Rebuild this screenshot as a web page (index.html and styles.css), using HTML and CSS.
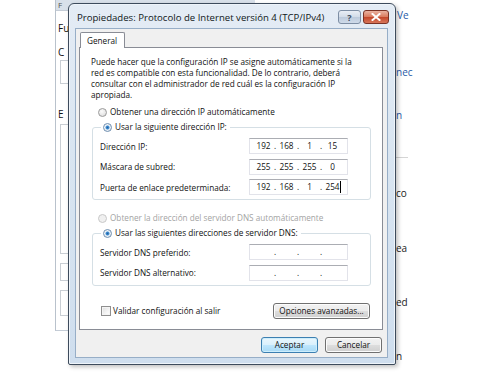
FILE: index.html
```html
<!DOCTYPE html>
<html lang="es">
<head>
    <meta charset="UTF-8">
    <meta name="viewport" content="width=device-width, initial-scale=1.0">
    <title>Propiedades: Protocolo de Internet versión 4 (TCP/IPv4)</title>
    <link rel="stylesheet" href="styles.css">
</head>
<body>
    <div class="desktop">
        <!-- window behind the dialog -->
        <div class="bg-window">
            <div class="bg-caption">F</div>
            <div class="bg-label bg-fu">Fu</div>
            <div class="bg-label">C</div>
            <div class="bg-box bg-box-small"></div>
            <div class="bg-label bg-e">E</div>
            <div class="bg-box bg-box-tall"></div>
            <div class="bg-box bg-box-btn"></div>
            <div class="bg-box bg-box-mid"></div>
        </div>

        <div class="bg-page">
            <div class="frag link frag-1">Ve</div>
            <div class="frag link frag-2">nec</div>
            <div class="frag link frag-3">n</div>
            <div class="frag-rule"></div>
            <div class="frag frag-4">co</div>
            <div class="frag frag-5">ea</div>
            <div class="frag frag-6">ed</div>
            <div class="frag frag-7">n</div>
        </div>

        <div class="dialog">
            <div class="titlebar">
                <span class="title">Propiedades: Protocolo de Internet versión 4 (TCP/IPv4)</span>
                <div class="caption-buttons">
                    <span class="cap-btn cap-help">?</span>
                    <span class="cap-btn cap-close">
                        <svg width="10" height="8" viewBox="0 0 10 8">
                            <path d="M1.5 1 L8.5 7 M8.5 1 L1.5 7" stroke="#fff" stroke-width="2" stroke-linecap="square"/>
                        </svg>
                    </span>
                </div>
            </div>

            <div class="client">
                <div class="tabs">
                    <div class="tab">General</div>
                </div>
                <div class="panel">
                    <p class="intro">Puede hacer que la configuración IP se asigne automáticamente si la red es compatible con esta funcionalidad. De lo contrario, deberá consultar con el administrador de red cuál es la configuración IP apropiada.</p>

                    <div class="option option-first">
                        <span class="radio"></span>
                        <span>Obtener una dirección IP automáticamente</span>
                    </div>

                    <fieldset class="group">
                        <legend class="option">
                            <span class="radio checked"></span>
                            <span>Usar la siguiente dirección IP:</span>
                        </legend>
                        <div class="field-row">
                            <span class="field-label">Dirección IP:</span>
                            <div class="ip-box">
                                <span class="oct">192</span><span class="dot">.</span><span class="oct">168</span><span class="dot">.</span><span class="oct">1</span><span class="dot">.</span><span class="oct">15</span>
                            </div>
                        </div>
                        <div class="field-row">
                            <span class="field-label">Máscara de subred:</span>
                            <div class="ip-box">
                                <span class="oct">255</span><span class="dot">.</span><span class="oct">255</span><span class="dot">.</span><span class="oct">255</span><span class="dot">.</span><span class="oct">0</span>
                            </div>
                        </div>
                        <div class="field-row">
                            <span class="field-label">Puerta de enlace predeterminada:</span>
                            <div class="ip-box">
                                <span class="oct">192</span><span class="dot">.</span><span class="oct">168</span><span class="dot">.</span><span class="oct">1</span><span class="dot">.</span><span class="oct caret">254</span>
                            </div>
                        </div>
                    </fieldset>

                    <div class="option option-dns disabled">
                        <span class="radio"></span>
                        <span>Obtener la dirección del servidor DNS automáticamente</span>
                    </div>

                    <fieldset class="group">
                        <legend class="option">
                            <span class="radio checked"></span>
                            <span>Usar las siguientes direcciones de servidor DNS:</span>
                        </legend>
                        <div class="field-row">
                            <span class="field-label">Servidor DNS preferido:</span>
                            <div class="ip-box">
                                <span class="oct"></span><span class="dot">.</span><span class="oct"></span><span class="dot">.</span><span class="oct"></span><span class="dot">.</span><span class="oct"></span>
                            </div>
                        </div>
                        <div class="field-row">
                            <span class="field-label">Servidor DNS alternativo:</span>
                            <div class="ip-box">
                                <span class="oct"></span><span class="dot">.</span><span class="oct"></span><span class="dot">.</span><span class="oct"></span><span class="dot">.</span><span class="oct"></span>
                            </div>
                        </div>
                    </fieldset>

                    <div class="panel-footer">
                        <div class="check-option">
                            <span class="checkbox"></span>
                            <span>Validar configuración al salir</span>
                        </div>
                        <button class="win-btn btn-advanced">Opciones avanzadas...</button>
                    </div>
                </div>

                <div class="dialog-buttons">
                    <button class="win-btn btn-default">Aceptar</button>
                    <button class="win-btn">Cancelar</button>
                </div>
            </div>
        </div>
    </div>
</body>
</html>
```

FILE: styles.css
```css
:root {
    --ui-font: 'Open Sans', 'Liberation Sans', sans-serif;
    --frame-edge: #3d4b5c;
    --tab-border: #898c95;
    --group-border: #d5dfe5;
    --link: #1f5aa8;
}

body {
    margin: 0;
    background: #fff;
    font-family: var(--ui-font);
    font-size: 8.2px;
    color: #111;
}

.desktop {
    position: relative;
    width: 480px;
    height: 374px;
    overflow: hidden;
    background: #fff;
}

/* background window on the left */
.bg-window {
    position: absolute;
    left: 55px;
    top: 0;
    width: 200px;
    height: 331px;
    background: #fff;
    border-left: 1px solid #b9c2cc;
    border-bottom: 1px solid #c4ccd6;
    padding-left: 2px;
    box-sizing: border-box;
}

.bg-caption {
    height: 10px;
    margin-left: -2px;
    padding-left: 2px;
    background: #d9e1ea;
    border-bottom: 1px solid #c4ccd6;
    font-size: 8px;
    line-height: 10px;
    color: #555;
}

.bg-label {
    font-size: 10px;
    line-height: 12px;
    margin-top: 12px;
}

.bg-fu {
    margin-top: 11px;
}

.bg-e {
    margin-top: 24px;
}

.bg-box {
    border: 1px solid #c9ced4;
    margin-left: 2px;
}

.bg-box-small {
    height: 22px;
    margin-top: 2px;
}

.bg-box-tall {
    height: 128px;
    margin-top: 4px;
}

.bg-box-btn {
    height: 16px;
    margin-top: 9px;
}

.bg-box-mid {
    height: 24px;
    margin-top: 9px;
}

/* page on the right */
.bg-page {
    position: absolute;
    left: 396px;
    top: 0;
    width: 84px;
    font-size: 10px;
    line-height: 12px;
    color: #222;
}

.frag {
    position: absolute;
    left: 0;
}

.link {
    color: var(--link);
}

.frag-1 { top: 9px; left: 1px; }
.frag-2 { top: 66px; }
.frag-3 { top: 109px; }
.frag-4 { top: 187px; }
.frag-5 { top: 242px; }
.frag-6 { top: 296px; }
.frag-7 { top: 350px; }

.frag-rule {
    position: absolute;
    top: 157px;
    left: 0;
    width: 12px;
    border-top: 1px solid #d5d5d5;
}

/* dialog */
.dialog {
    position: absolute;
    left: 68px;
    top: 3px;
    width: 328px;
    height: 362px;
    box-sizing: border-box;
    border: 1px solid var(--frame-edge);
    border-radius: 6px 6px 2px 2px;
    background: linear-gradient(180deg, #e4ecf5 0%, #d9e5f1 40%, #cfdeee 100%);
    box-shadow: inset 0 0 0 1px #eef4fa, 2px 2px 4px rgba(0, 0, 0, 0.25);
    padding: 0 7px 6px 6px;
    display: flex;
    flex-direction: column;
}

.titlebar {
    height: 24px;
    display: flex;
    align-items: center;
    justify-content: space-between;
    flex-shrink: 0;
}

.title {
    font-size: 9.6px;
    color: #101820;
    padding-left: 2px;
    margin-top: 2px;
    white-space: nowrap;
}

.caption-buttons {
    display: flex;
    gap: 2px;
    margin-right: -1px;
    margin-top: 2px;
}

.cap-btn {
    height: 14px;
    box-sizing: border-box;
    border: 1px solid #7d8ea4;
    border-radius: 3px;
    display: flex;
    align-items: center;
    justify-content: center;
}

.cap-help {
    width: 23px;
    background: linear-gradient(180deg, #e9eef5 0%, #d2dce8 50%, #bccadb 51%, #cfdbea 100%);
    color: #3b4b5f;
    font-size: 9px;
    font-weight: bold;
}

.cap-close {
    width: 26px;
    border-color: #7a3326;
    background: linear-gradient(180deg, #eab3a2 0%, #d9795d 50%, #c3462a 51%, #d7765a 100%);
}

.client {
    flex: 1;
    background: #f0f0f0;
    border: 1px solid #97aec7;
    padding: 3px 4px 4px 3px;
    display: flex;
    flex-direction: column;
}

.tabs {
    display: flex;
    height: 16px;
    position: relative;
    z-index: 1;
}

.tab {
    background: #fff;
    border: 1px solid var(--tab-border);
    border-bottom: none;
    border-radius: 2px 2px 0 0;
    padding: 0 7px 0 6px;
    line-height: 15px;
    height: 16px;
    box-sizing: border-box;
    margin-left: 1px;
}

.panel {
    height: 283px;
    box-sizing: border-box;
    margin-top: -1px;
    background: #fff;
    border: 1px solid var(--tab-border);
    padding: 8px 10px 0 11px;
    display: flex;
    flex-direction: column;
}

.intro {
    margin: 0;
    line-height: 11px;
    width: 270px;
}

.option {
    display: flex;
    align-items: center;
    gap: 3px;
    height: 12px;
    line-height: 12px;
    white-space: nowrap;
}

.option-first {
    margin-top: 6px;
    margin-left: 7px;
}

.option-dns {
    margin-top: 12px;
    margin-left: 7px;
}

.disabled {
    color: #a3a3a3;
}

.radio {
    width: 9px;
    height: 9px;
    box-sizing: border-box;
    border-radius: 50%;
    border: 1px solid #9a9a9a;
    background: radial-gradient(circle at 40% 35%, #fbfbfb 0%, #e3e3e3 70%, #d0d0d0 100%);
    flex-shrink: 0;
}

.disabled .radio {
    border-color: #c8c8c8;
    background: #f0f0f0;
}

.radio.checked {
    border-color: #6f8fb0;
    background:
        radial-gradient(circle, #1d5f9c 0%, #3f8bd0 28%, #9fc8ea 42%, transparent 48%),
        radial-gradient(circle at 40% 35%, #fbfbfb 0%, #dfe6ee 100%);
}

.group {
    margin: 3px 0 0 1px;
    width: 279px;
    box-sizing: border-box;
    border: 1px solid var(--group-border);
    border-radius: 3px;
    padding: 2px 22px 4px 7px;
}

.group legend {
    padding: 0 3px 0 2px;
    margin-left: 1px;
    color: #111;
}

.field-row {
    display: flex;
    align-items: center;
    justify-content: space-between;
    height: 16px;
    margin-top: 4.5px;
}

.field-row:first-of-type {
    margin-top: 3px;
}

.ip-box {
    width: 99px;
    height: 16px;
    box-sizing: border-box;
    border: 1px solid #e2e3ea;
    border-top-color: #abadb3;
    background: #fff;
    display: flex;
    align-items: center;
    padding-left: 5px;
    line-height: 14px;
}

.oct {
    width: 17px;
    text-align: center;
}

.dot {
    width: 6px;
    text-align: center;
}

.caret {
    position: relative;
}

.caret::after {
    content: "";
    position: absolute;
    right: 0;
    top: 1px;
    height: 12px;
    border-left: 1px solid #000;
}

.panel-footer {
    display: flex;
    align-items: center;
    justify-content: space-between;
    margin-top: 17px;
    padding-left: 10px;
    padding-right: 2px;
}

.check-option {
    display: flex;
    align-items: center;
    gap: 2px;
}

.checkbox {
    width: 10px;
    height: 10px;
    box-sizing: border-box;
    border: 1px solid #8f8f8f;
    background: linear-gradient(135deg, #dcdcdc 0%, #f4f4f4 60%, #fff 100%);
    box-shadow: inset 0 0 0 1px #f4f4f4;
}

.win-btn {
    font-family: var(--ui-font);
    font-size: 8.2px;
    color: #111;
    height: 16px;
    padding: 0;
    border: 1px solid #707070;
    border-radius: 3px;
    background: linear-gradient(180deg, #f2f2f2 0%, #ebebeb 50%, #dddddd 51%, #cfcfcf 100%);
    box-shadow: inset 0 0 0 1px #fcfcfc;
    line-height: 14px;
}

.btn-advanced {
    width: 97px;
}

.dialog-buttons {
    display: flex;
    justify-content: flex-end;
    gap: 7px;
    margin-top: 7px;
    padding-right: 1px;
}

.dialog-buttons .win-btn {
    width: 57px;
}

.btn-default {
    border-color: #3c7fb1;
    background: linear-gradient(180deg, #eaf6fd 0%, #d9f0fc 50%, #bee6fd 51%, #a7d9f5 100%);
    box-shadow: inset 0 0 0 1px #cdeefc;
}
```
